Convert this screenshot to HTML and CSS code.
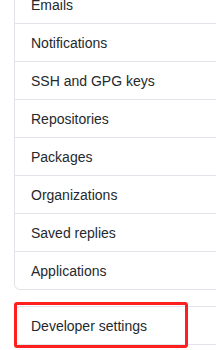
FILE: index.html
```html
<!DOCTYPE html>
<html lang="en">
<head>
  <meta charset="UTF-8" />
  <title>Settings</title>
  <link rel="stylesheet" href="styles.css">
</head>
<body>
  <!-- Menu de configurações -->
  <nav class="settings-menu">
    <a class="menu-item" href="#">Emails</a>
    <a class="menu-item" href="#">Notifications</a>
    <a class="menu-item" href="#">SSH and GPG keys</a>
    <a class="menu-item" href="#">Repositories</a>
    <a class="menu-item" href="#">Packages</a>
    <a class="menu-item" href="#">Organizations</a>
    <a class="menu-item" href="#">Saved replies</a>
    <a class="menu-item" href="#">Applications</a>
  </nav>

  <nav class="settings-menu developer">
    <a class="menu-item" href="#">Developer settings</a>
    <span class="highlight"></span>
  </nav>
</body>
</html>
```

FILE: styles.css
```css
* {
  margin: 0;
  padding: 0;
  box-sizing: border-box;
}

html {
  overflow: hidden;
}

body {
  font-family: "Liberation Sans", Arial, sans-serif;
  font-size: 14px;
  color: #24292e;
  background: #fff;
  padding-left: 14px;
  padding-bottom: 20px;
}

.settings-menu {
  width: 240px;
  margin-top: -15px;
  border: 1px solid #e1e4e8;
  border-radius: 6px;
  display: flex;
  flex-direction: column;
}

.menu-item {
  display: block;
  padding: 9px 16px 7px;
  line-height: 21px;
  color: #24292e;
  text-decoration: none;
  border-bottom: 1px solid #e1e4e8;
}

.menu-item:last-of-type {
  border-bottom: none;
}

.settings-menu.developer {
  position: relative;
  margin-top: 16px;
}

/* Marcação vermelha por cima */
.highlight {
  position: absolute;
  top: -5px;
  left: -1px;
  width: 174px;
  height: 46px;
  border: 3px solid #ff1f1f;
  border-radius: 3px;
  pointer-events: none;
}
```
